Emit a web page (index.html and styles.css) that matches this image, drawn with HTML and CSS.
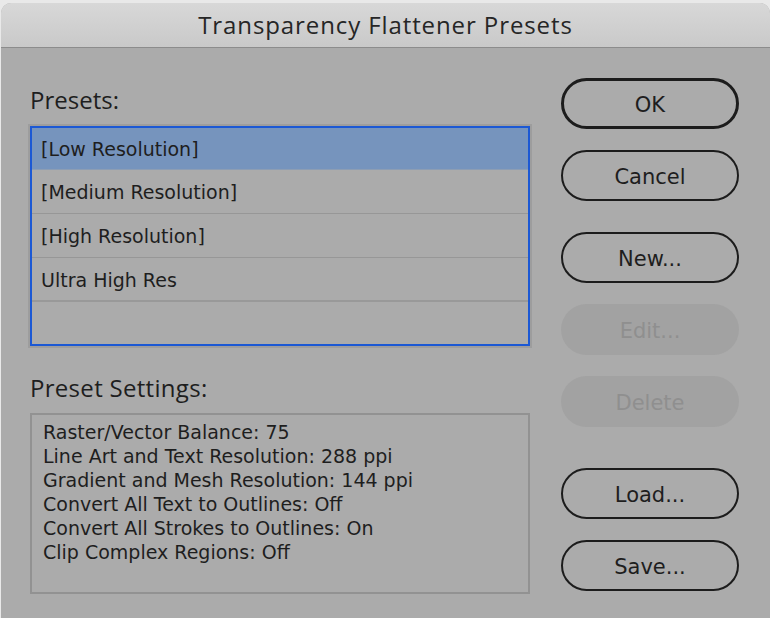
FILE: index.html
```html
<!DOCTYPE html>
<html lang="en">
<head>
    <meta charset="UTF-8">
    <meta name="viewport" content="width=device-width, initial-scale=1.0">
    <title>Transparency Flattener Presets</title>
    <link rel="stylesheet" href="styles.css">
</head>
<body>
    <div class="window">
        <div class="titlebar">Transparency Flattener Presets</div>

        <div class="dialog">
            <!-- Left column -->
            <div class="left">
                <div class="label">Presets:</div>
                <div class="list">
                    <div class="row selected">[Low Resolution]</div>
                    <div class="row">[Medium Resolution]</div>
                    <div class="row">[High Resolution]</div>
                    <div class="row last">Ultra High Res</div>
                    <div class="row empty"></div>
                </div>

                <div class="label settings-label">Preset Settings:</div>
                <div class="settings">
                    <div>Raster/Vector Balance: 75</div>
                    <div>Line Art and Text Resolution: 288 ppi</div>
                    <div>Gradient and Mesh Resolution: 144 ppi</div>
                    <div>Convert All Text to Outlines: Off</div>
                    <div>Convert All Strokes to Outlines: On</div>
                    <div>Clip Complex Regions: Off</div>
                </div>
            </div>

            <!-- Buttons -->
            <div class="buttons">
                <button class="btn default">OK</button>
                <button class="btn">Cancel</button>
                <button class="btn group">New...</button>
                <button class="btn" disabled>Edit...</button>
                <button class="btn" disabled>Delete</button>
                <button class="btn group-wide">Load...</button>
                <button class="btn">Save...</button>
            </div>
        </div>
    </div>
</body>
</html>
```

FILE: styles.css
```css
html, body {
    margin: 0;
    padding: 0;
    background: #e9e9e9;
}

/* Window */
.window {
    width: 769px;
    height: 615px;
    margin: 3px 0 0 1px;
    background: #ababab;
    border-radius: 10px 10px 0 0;
    overflow: hidden;
    color: #1e1e1e;
    font-family: "DejaVu Sans", sans-serif;
}

.titlebar {
    height: 44px;
    line-height: 44px;
    text-align: center;
    font-family: "Open Sans", sans-serif;
    font-size: 24px;
    letter-spacing: 0.9px;
    color: #262626;
    background: linear-gradient(#d8d8d8, #c9c9c9);
    border-bottom: 1px solid #8c8c8c;
}

/* Layout */
.dialog {
    display: flex;
    gap: 31px;
    padding-left: 29px;
}

.left {
    width: 500px;
}

.label {
    font-family: "Open Sans", sans-serif;
    font-size: 24px;
    line-height: 28px;
    padding-top: 38px;
    margin-bottom: 12px;
}

.settings-label {
    padding-top: 28px;
    margin-bottom: 11px;
    letter-spacing: 0.3px;
}

/* Presets list */
.list {
    border: 2px solid #1b58d4;
    box-shadow: 0 0 0 2px #9d9d9d;
    font-size: 19px;
}

.row {
    height: 44px;
    line-height: 43px;
    padding: 1px 0 0 9px;
    box-sizing: border-box;
    border-bottom: 1px solid #979797;
}

.row.selected {
    height: 42px;
    line-height: 40px;
    background: #7694bd;
    border-bottom-color: #8c9db4;
}

.row.last {
    border-bottom: 2px solid #999;
}

.row.empty {
    height: 42px;
    border-bottom: none;
}

/* Settings box */
.settings {
    height: 181px;
    box-sizing: border-box;
    border: 2px solid #929292;
    padding: 5px 11px;
    font-size: 19px;
    line-height: 24px;
}

/* Buttons */
.buttons {
    width: 178px;
    display: flex;
    flex-direction: column;
    padding-top: 30px;
}

.btn {
    height: 51px;
    margin-top: 21px;
    border: 2px solid #1c1c1c;
    border-radius: 26px;
    background: transparent;
    font-family: "DejaVu Sans", sans-serif;
    font-size: 21px;
    color: #1e1e1e;
    padding: 3px 0 0;
}

.btn.default {
    margin-top: 0;
    border-width: 3px;
}

.btn.group { margin-top: 31px; }
.btn.group-wide { margin-top: 41px; }

.btn:disabled {
    border-color: transparent;
    background: #a2a2a2;
    color: #8f8f8f;
}
```
